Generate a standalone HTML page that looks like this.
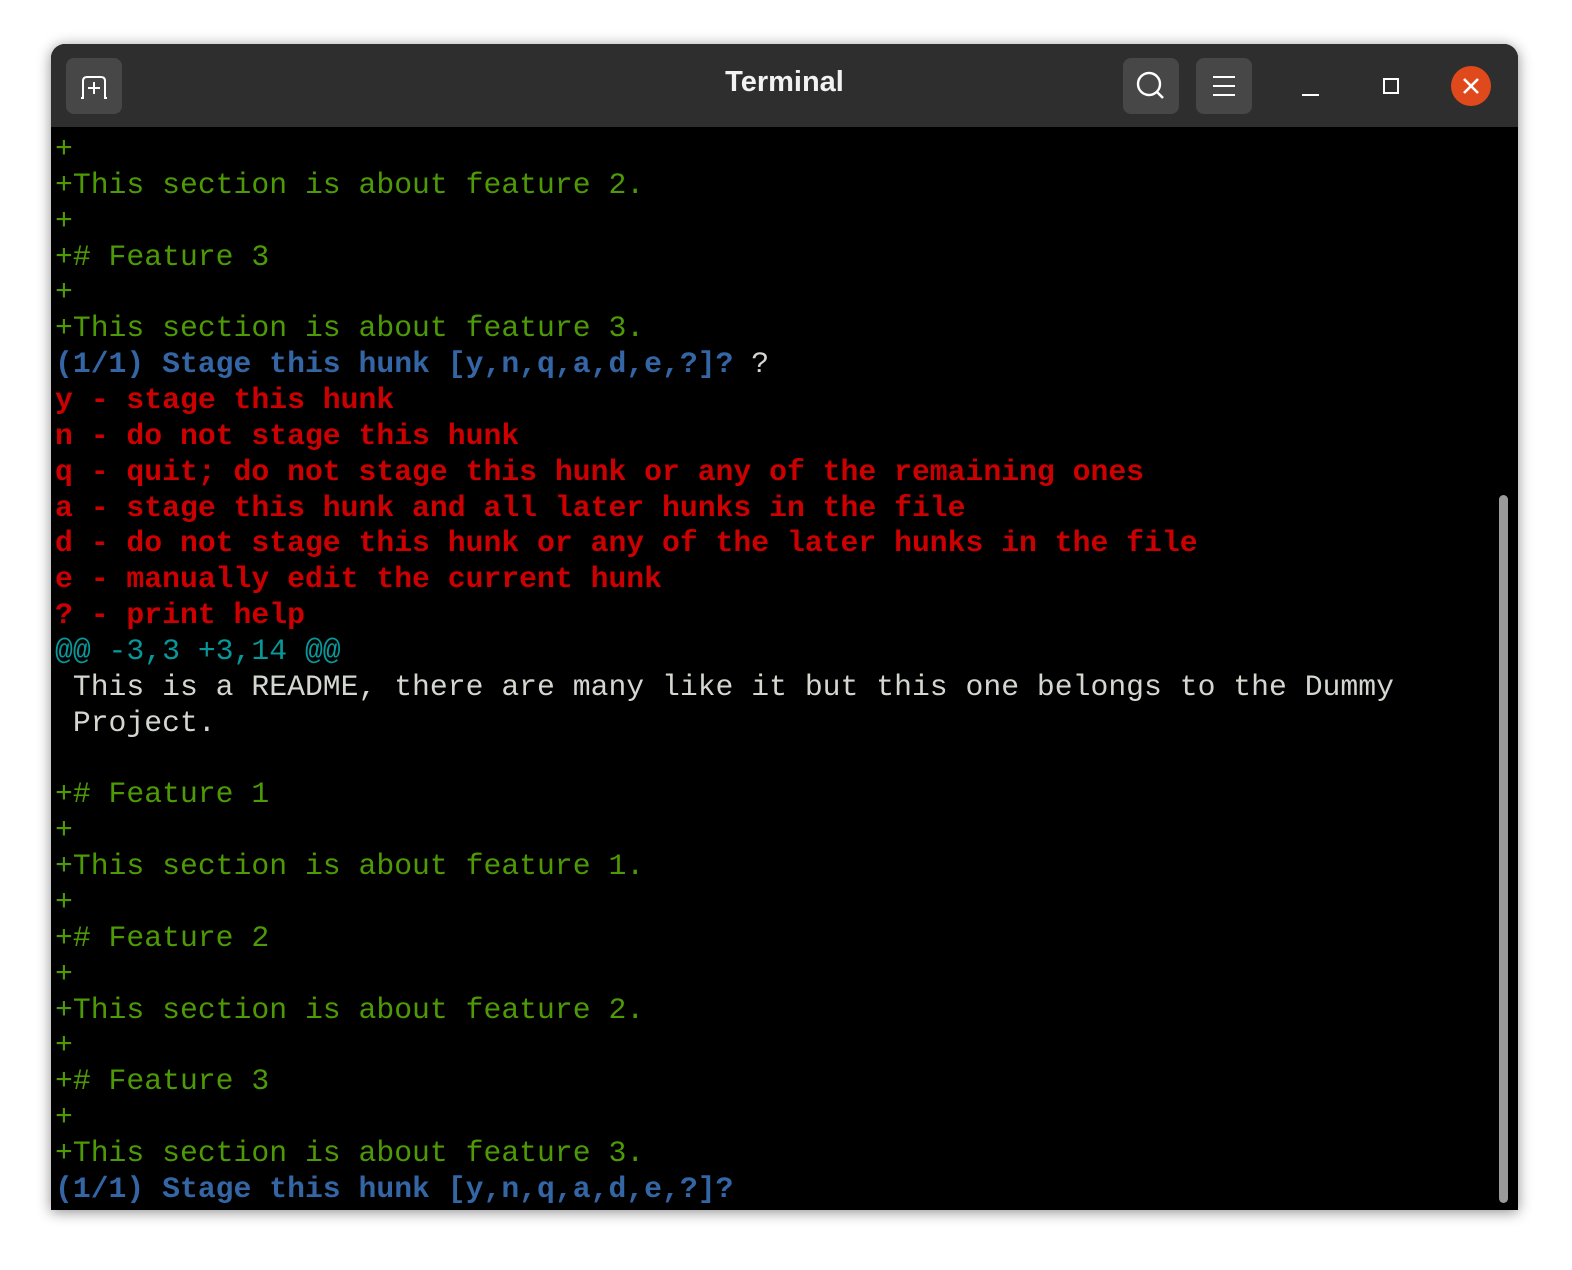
<!DOCTYPE html>
<html><head><meta charset="utf-8"><style>
body{margin:0;width:1572px;height:1270px;background:#fff;position:relative;overflow:hidden}
.win{position:absolute;left:51px;top:44px;width:1467px;height:1166px;background:#000;border-radius:14px 14px 0 0;overflow:hidden;box-shadow:0 2px 14px rgba(0,0,0,.45)}
.tb{position:absolute;left:0;top:0;width:100%;height:83px;background:#2e2e2e}
.btn{position:absolute;top:14px;width:56px;height:56px;background:#474747;border-radius:8px}
.title{position:absolute;left:0;width:100%;top:22px;text-align:center;color:#f2f2f2;font:bold 29px "Liberation Sans",sans-serif}
pre{position:absolute;left:4px;top:88px;margin:0;font-family:"Liberation Mono",monospace;font-size:29.75px;line-height:35.86px;color:#d3d7cf}
.g{color:#4e9a06}.b{color:#3465a4;font-weight:bold}.r{color:#cc0000;font-weight:bold}.c{color:#06989a}
.sb{position:absolute;left:1448px;top:451px;width:9px;height:708px;background:#9a9a9a;border-radius:5px}
</style></head><body>
<div class="win">
<div class="tb">
<div class="btn" style="left:15px"><svg width="56" height="56"><path d="M15 40h2V23q0-4 4-4h14q4 0 4 4v17h2" fill="none" stroke="#fff" stroke-width="2"/><path d="M28 24v12M22 30h12" stroke="#fff" stroke-width="2"/></svg></div>
<div class="title">Terminal</div>
<div class="btn" style="left:1072px"><svg width="56" height="56"><circle cx="26" cy="26" r="11" fill="none" stroke="#fff" stroke-width="2.4"/><path d="M34 34l6 6" stroke="#fff" stroke-width="2.6"/></svg></div>
<div class="btn" style="left:1145px"><svg width="56" height="56"><path d="M17 19h22M17 28h22M17 37h22" stroke="#fff" stroke-width="2"/></svg></div>
<svg style="position:absolute;left:1240px;top:26px" width="60" height="40"><path d="M11 25h17" stroke="#fff" stroke-width="2"/></svg>
<svg style="position:absolute;left:1320px;top:26px" width="40" height="40"><rect x="13" y="9" width="14" height="14" fill="none" stroke="#fff" stroke-width="2"/></svg>
<svg style="position:absolute;left:1399px;top:22px" width="42" height="42"><circle cx="21" cy="20" r="20" fill="#e0491b"/><path d="M14 13l14 14M28 13L14 27" stroke="#fff" stroke-width="2.6"/></svg>
</div>
<pre><span class="g">+
+This section is about feature 2.
+
+# Feature 3
+
+This section is about feature 3.</span>
<span class="b">(1/1) Stage this hunk [y,n,q,a,d,e,?]?</span> ?
<span class="r">y - stage this hunk
n - do not stage this hunk
q - quit; do not stage this hunk or any of the remaining ones
a - stage this hunk and all later hunks in the file
d - do not stage this hunk or any of the later hunks in the file
e - manually edit the current hunk
? - print help</span>
<span class="c">@@ -3,3 +3,14 @@</span>
 This is a README, there are many like it but this one belongs to the Dummy
 Project.

<span class="g">+# Feature 1
+
+This section is about feature 1.
+
+# Feature 2
+
+This section is about feature 2.
+
+# Feature 3
+
+This section is about feature 3.</span>
<span class="b">(1/1) Stage this hunk [y,n,q,a,d,e,?]?</span></pre>
<div class="sb"></div>
</div>
</body></html>
